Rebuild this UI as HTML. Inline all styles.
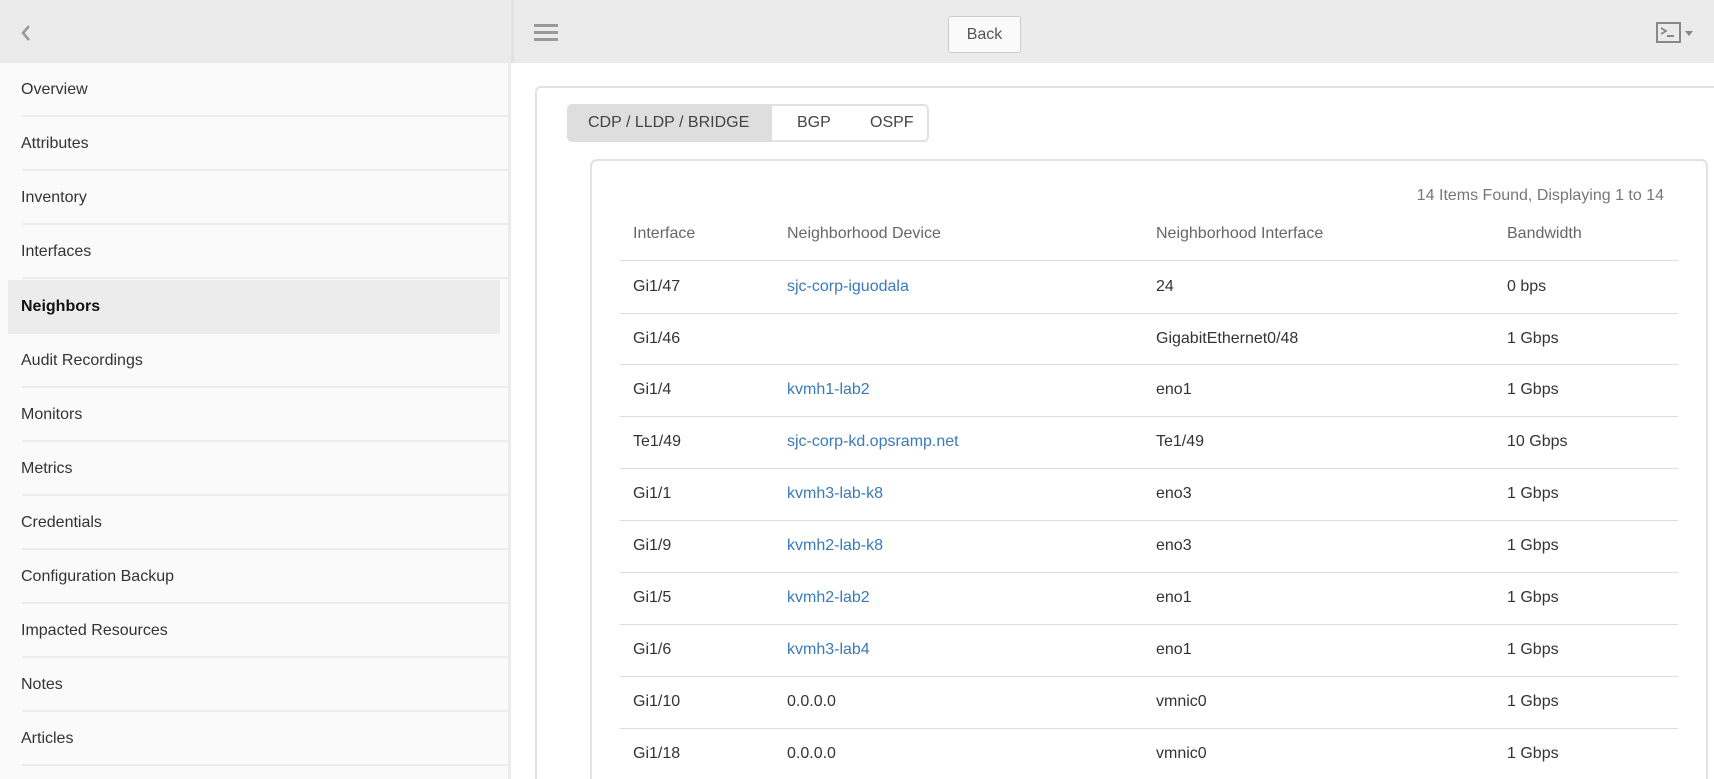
<!DOCTYPE html>
<html><head><meta charset="utf-8"><style>
*{box-sizing:border-box;margin:0;padding:0}
html,body{width:1714px;height:779px;overflow:hidden;background:#fff}
body{font-family:"Liberation Sans",sans-serif;color:#333}
#wrap{position:relative;width:1714px;height:779px;overflow:hidden}
.abs{position:absolute}
.top{left:0;top:0;width:1714px;height:63px;background:#ebebeb}
.side{left:0;top:63px;width:511px;height:716px;background:#fafafa;border-right:3px solid #ececec}
.item{position:absolute;left:0;width:508px;height:54px;font-size:16px;line-height:54px;padding-left:21px;color:#333}
.item:after{content:"";position:absolute;left:22px;right:0;bottom:0;height:2px;background:#ececec}
.sel{background:#ececec;left:8px;width:492px;padding-left:13px;font-weight:bold;color:#111}
.sel:after{display:none}
.td{position:absolute;font-size:16px;color:#333;white-space:nowrap}
.hd{color:#666}
.ln{position:absolute;left:620px;width:1058px;height:1px;background:#dcdcdc}
a{color:#3a7ab8;text-decoration:none}
</style></head><body><div id="wrap">
<div class="abs top"></div>
<div class="abs" style="left:511px;top:0;width:3px;height:63px;background:#e2e2e2"></div>
<svg class="abs" style="left:20px;top:24px" width="12" height="18"><path d="M9 2 L3 9 L9 16" fill="none" stroke="#999" stroke-width="2.5"/></svg>
<svg class="abs" style="left:534px;top:23px" width="24" height="20"><rect x="0" y="1" width="24" height="3" fill="#999"/><rect x="0" y="8" width="24" height="3" fill="#999"/><rect x="0" y="15" width="24" height="3" fill="#999"/></svg>
<div class="abs" style="left:948px;top:16px;width:73px;height:37px;border:1px solid #ccc;border-radius:3px;background:#fafafa;font-size:16px;line-height:35px;text-align:center;color:#555">Back</div>
<svg class="abs" style="left:1656px;top:22px" width="40" height="22"><rect x="1" y="1" width="23" height="19" fill="none" stroke="#888" stroke-width="2"/><path d="M5 6 L10 9 L5 12" fill="none" stroke="#888" stroke-width="1.8"/><rect x="11" y="13" width="7" height="2" fill="#888"/><path d="M29 9 L37 9 L33 14 Z" fill="#888"/></svg>

<div class="abs side">
<div class="item" style="top:0">Overview</div>
<div class="item" style="top:54px">Attributes</div>
<div class="item" style="top:108px">Inventory</div>
<div class="item" style="top:162px">Interfaces</div>
<div class="item sel" style="top:217px">Neighbors</div>
<div class="item" style="top:271px">Audit Recordings</div>
<div class="item" style="top:325px">Monitors</div>
<div class="item" style="top:379px">Metrics</div>
<div class="item" style="top:433px">Credentials</div>
<div class="item" style="top:487px">Configuration Backup</div>
<div class="item" style="top:541px">Impacted Resources</div>
<div class="item" style="top:595px">Notes</div>
<div class="item" style="top:649px">Articles</div>
</div>

<div class="abs" style="left:535px;top:86px;width:1179px;height:693px;border:2px solid #e2e2e2;border-right:none;border-bottom:none;border-radius:6px 0 0 0"></div>
<div class="abs" style="left:567px;top:104px;width:362px;height:38px;border:2px solid #e2e2e2;border-radius:5px;background:#fff;font-size:16px;line-height:34px;color:#444">
<div class="abs" style="left:-2px;top:-2px;width:205px;height:38px;background:#dedede;border-radius:5px 0 0 5px"></div>
<span class="abs" style="left:19px;top:0">CDP / LLDP / BRIDGE</span>
<span class="abs" style="left:228px;top:0">BGP</span>
<span class="abs" style="left:301px;top:0">OSPF</span>
</div>
<div class="abs" style="left:590px;top:159px;width:1118px;height:620px;border:2px solid #e2e2e2;border-bottom:none;border-radius:7px 7px 0 0"></div>
<div class="td" style="right:50px;top:187px;color:#777">14 Items Found, Displaying 1 to 14</div>

<div class="td hd" style="left:633px;top:225px">Interface</div>
<div class="td hd" style="left:787px;top:225px">Neighborhood Device</div>
<div class="td hd" style="left:1156px;top:225px">Neighborhood Interface</div>
<div class="td hd" style="left:1507px;top:225px">Bandwidth</div>
<div class="ln" style="top:260px"></div>

<div class="td" style="left:633px;top:278px">Gi1/47</div><div class="td" style="left:787px;top:278px"><a>sjc-corp-iguodala</a></div><div class="td" style="left:1156px;top:278px">24</div><div class="td" style="left:1507px;top:278px">0 bps</div>
<div class="ln" style="top:313px"></div>
<div class="td" style="left:633px;top:330px">Gi1/46</div><div class="td" style="left:1156px;top:330px">GigabitEthernet0/48</div><div class="td" style="left:1507px;top:330px">1 Gbps</div>
<div class="ln" style="top:364px"></div>
<div class="td" style="left:633px;top:381px">Gi1/4</div><div class="td" style="left:787px;top:381px"><a>kvmh1-lab2</a></div><div class="td" style="left:1156px;top:381px">eno1</div><div class="td" style="left:1507px;top:381px">1 Gbps</div>
<div class="ln" style="top:416px"></div>
<div class="td" style="left:633px;top:433px">Te1/49</div><div class="td" style="left:787px;top:433px"><a>sjc-corp-kd.opsramp.net</a></div><div class="td" style="left:1156px;top:433px">Te1/49</div><div class="td" style="left:1507px;top:433px">10 Gbps</div>
<div class="ln" style="top:468px"></div>
<div class="td" style="left:633px;top:485px">Gi1/1</div><div class="td" style="left:787px;top:485px"><a>kvmh3-lab-k8</a></div><div class="td" style="left:1156px;top:485px">eno3</div><div class="td" style="left:1507px;top:485px">1 Gbps</div>
<div class="ln" style="top:520px"></div>
<div class="td" style="left:633px;top:537px">Gi1/9</div><div class="td" style="left:787px;top:537px"><a>kvmh2-lab-k8</a></div><div class="td" style="left:1156px;top:537px">eno3</div><div class="td" style="left:1507px;top:537px">1 Gbps</div>
<div class="ln" style="top:572px"></div>
<div class="td" style="left:633px;top:589px">Gi1/5</div><div class="td" style="left:787px;top:589px"><a>kvmh2-lab2</a></div><div class="td" style="left:1156px;top:589px">eno1</div><div class="td" style="left:1507px;top:589px">1 Gbps</div>
<div class="ln" style="top:624px"></div>
<div class="td" style="left:633px;top:641px">Gi1/6</div><div class="td" style="left:787px;top:641px"><a>kvmh3-lab4</a></div><div class="td" style="left:1156px;top:641px">eno1</div><div class="td" style="left:1507px;top:641px">1 Gbps</div>
<div class="ln" style="top:676px"></div>
<div class="td" style="left:633px;top:693px">Gi1/10</div><div class="td" style="left:787px;top:693px">0.0.0.0</div><div class="td" style="left:1156px;top:693px">vmnic0</div><div class="td" style="left:1507px;top:693px">1 Gbps</div>
<div class="ln" style="top:728px"></div>
<div class="td" style="left:633px;top:745px">Gi1/18</div><div class="td" style="left:787px;top:745px">0.0.0.0</div><div class="td" style="left:1156px;top:745px">vmnic0</div><div class="td" style="left:1507px;top:745px">1 Gbps</div>
</div></body></html>
